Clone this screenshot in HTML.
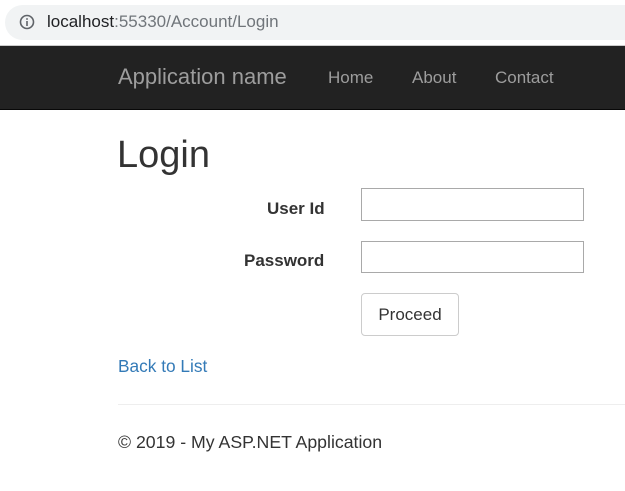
<!DOCTYPE html>
<html><head><meta charset="utf-8"><style>
*{box-sizing:border-box;margin:0;padding:0}
body{width:625px;height:491px;overflow:hidden;background:#fff;font-family:"Liberation Sans",Arial,sans-serif;position:relative;color:#333}
.a{position:absolute}
.bar{left:5px;top:5px;width:640px;height:35px;background:#f1f3f4;border-radius:18px}
.line{left:0;top:45px;width:625px;height:1px;background:#ccc}
.nav{left:0;top:46px;width:625px;height:64px;background:#222;border-bottom:1px solid #080808}
.inp{border:1px solid #a9a9a9;background:#fff}
</style></head><body>
<div class="a bar"></div>
<svg class="a" style="left:19px;top:14px" width="16" height="16" viewBox="0 0 16 16"><circle cx="8" cy="8" r="6.5" fill="none" stroke="#5f6368" stroke-width="1.6"/><rect x="7.2" y="7" width="1.6" height="5" fill="#5f6368"/><rect x="7.2" y="4.2" width="1.6" height="1.6" fill="#5f6368"/></svg>
<div class="a" style="left:47px;top:12px;font-size:17px;color:#202124">localhost<span style="color:#70757a">:55330/Account/Login</span></div>
<div class="a line"></div>
<div class="a nav"></div>
<div class="a" style="left:118px;top:64px;font-size:22px;color:#9d9d9d">Application name</div>
<div class="a" style="left:328px;top:68px;font-size:17px;color:#9d9d9d">Home</div>
<div class="a" style="left:412px;top:68px;font-size:17px;color:#9d9d9d">About</div>
<div class="a" style="left:495px;top:68px;font-size:17px;color:#9d9d9d">Contact</div>
<div class="a" style="left:117px;top:134px;font-size:38px;color:#333">Login</div>
<div class="a" style="left:267px;top:199px;font-size:17px;font-weight:bold">User Id</div>
<div class="a" style="left:244px;top:251px;font-size:17px;font-weight:bold">Password</div>
<div class="a inp" style="left:361px;top:188px;width:223px;height:33px"></div>
<div class="a inp" style="left:361px;top:241px;width:223px;height:32px"></div>
<div class="a" style="left:361px;top:293px;width:98px;height:43px;border:1px solid #ccc;border-radius:4px;font-size:17px;text-align:center;line-height:41px;color:#333">Proceed</div>
<div class="a" style="left:118px;top:356px;font-size:17.3px;color:#337ab7">Back to List</div>
<div class="a" style="left:118px;top:404px;width:507px;height:1px;background:#eee"></div>
<div class="a" style="left:118px;top:432px;font-size:17.7px;color:#333">© 2019 - My ASP.NET Application</div>
</body></html>
